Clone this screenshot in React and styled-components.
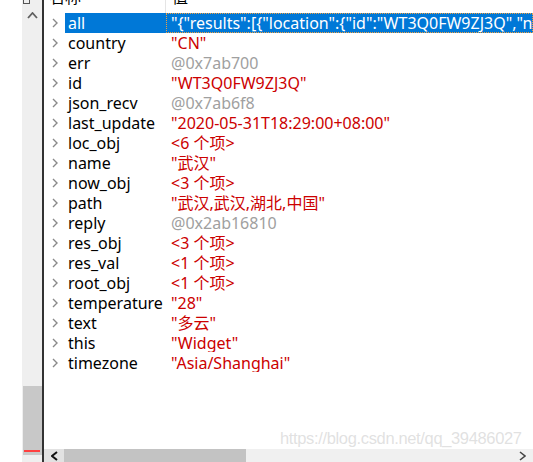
import React from "react";
import styled, { createGlobalStyle } from "styled-components";

const GlobalStyle = createGlobalStyle`
  html, body {
    margin: 0;
    padding: 0;
    background: #fff;
  }
  body {
    font-family: "Noto Sans", "Noto Sans CJK SC", sans-serif;
  }
`;

const Frame = styled.div`
  position: relative;
  display: flex;
  width: 533px;
  height: 462px;
  overflow: hidden;
  background: #fff;
`;

const Gutter = styled.div`
  width: 22px;
  flex: none;
  background: #fff;
`;

const ToolFragment = styled.div`
  position: absolute;
  left: 23px;
  top: -4px;
  width: 5px;
  height: 6px;
  border: 1px solid #555;
  z-index: 2;
`;

const VScroll = styled.div`
  width: 20px;
  flex: none;
  background: #efefef;
  display: flex;
  flex-direction: column;
  align-items: center;
`;

const ScrollButton = styled.div`
  height: ${(p) => p.size}px;
  width: 100%;
  display: flex;
  align-items: center;
  justify-content: center;
  flex: none;
`;

const VTrack = styled.div`
  flex: 1;
`;

const VThumb = styled.div`
  width: 19px;
  height: 69px;
  margin: 0 0 7px 0;
  background: #c8c8c8;
  display: flex;
  align-items: flex-end;
  justify-content: center;
  padding-bottom: 3px;
  box-sizing: border-box;
`;

const RedMark = styled.div`
  width: 16px;
  height: 2px;
  background: #ff4040;
`;

const Divider = styled.div`
  width: 2px;
  flex: none;
  background: #333;
`;

const Main = styled.div`
  flex: 1;
  display: flex;
  flex-direction: column;
  min-width: 0;
`;

const Header = styled.div`
  height: 13px;
  flex: none;
  display: grid;
  grid-template-columns: 122px 1fr;
  overflow: hidden;
  font-size: 16px;
  color: #000;
`;

const HeaderCell = styled.div`
  padding-left: ${(p) => p.pad}px;
  line-height: 20px;
  margin-top: -13px;
  border-right: ${(p) => (p.sep ? "1px solid #e5e5e5" : "none")};
  white-space: nowrap;
`;

const List = styled.div`
  flex: 1;
  display: flex;
  flex-direction: column;
`;

const Row = styled.div`
  display: grid;
  grid-template-columns: 21px 101px 1fr;
  height: 20px;
  font-size: 16px;
  line-height: 20px;
  white-space: nowrap;
`;

const Expander = styled.div`
  display: flex;
  align-items: center;
  justify-content: center;
  padding-left: 1px;
`;

const NameCell = styled.div`
  padding-left: 3px;
  background: ${(p) => (p.selected ? "#0078d7" : "transparent")};
  color: ${(p) => (p.selected ? "#fff" : "#000")};
  overflow: hidden;
`;

const ValueCell = styled.div`
  padding-left: 4px;
  background: ${(p) => (p.selected ? "#0078d7" : "transparent")};
  color: ${(p) =>
    p.selected ? "#fff" : p.kind === "ptr" ? "#a0a0a0" : "#cc0000"};
  border: 1px dotted ${(p) => (p.selected ? "#f0a040" : "transparent")};
  line-height: 18px;
  overflow: hidden;
`;

const HScroll = styled.div`
  height: 13px;
  flex: none;
  display: flex;
  background: #f0f0f0;
`;

const HButton = styled.div`
  width: ${(p) => p.w}px;
  flex: none;
  display: flex;
  align-items: center;
  justify-content: center;
  background: ${(p) => p.bg || "transparent"};
`;

const HThumb = styled.div`
  width: 182px;
  background: #c3c3c3;
  flex: none;
`;

const HTrack = styled.div`
  flex: 1;
`;

const Watermark = styled.div`
  position: absolute;
  left: 280px;
  top: 429px;
  font-family: "Liberation Sans", Arial, sans-serif;
  font-size: 16.5px;
  letter-spacing: -0.35px;
  color: rgba(200, 200, 200, 0.55);
  white-space: nowrap;
  pointer-events: none;
`;

const Chevron = ({ dir = "right", color = "#8a8a8a", w = 6, h = 10, sw = 1.4 }) => {
  const paths = {
    right: `M1 1 L${w - 1} ${h / 2} L1 ${h - 1}`,
    left: `M${w - 1} 1 L1 ${h / 2} L${w - 1} ${h - 1}`,
    up: `M1 ${h - 1} L${w / 2} 1 L${w - 1} ${h - 1}`,
  };
  return (
    <svg width={w} height={h} viewBox={`0 0 ${w} ${h}`}>
      <path d={paths[dir]} fill="none" stroke={color} strokeWidth={sw} />
    </svg>
  );
};

const rows = [
  { name: "all", value: '"{"results":[{"location":{"id":"WT3Q0FW9ZJ3Q","name":"武汉"', selected: true },
  { name: "country", value: '"CN"' },
  { name: "err", value: "@0x7ab700", kind: "ptr" },
  { name: "id", value: '"WT3Q0FW9ZJ3Q"' },
  { name: "json_recv", value: "@0x7ab6f8", kind: "ptr" },
  { name: "last_update", value: '"2020-05-31T18:29:00+08:00"' },
  { name: "loc_obj", value: "<6 个项>" },
  { name: "name", value: '"武汉"' },
  { name: "now_obj", value: "<3 个项>" },
  { name: "path", value: '"武汉,武汉,湖北,中国"' },
  { name: "reply", value: "@0x2ab16810", kind: "ptr" },
  { name: "res_obj", value: "<3 个项>" },
  { name: "res_val", value: "<1 个项>" },
  { name: "root_obj", value: "<1 个项>" },
  { name: "temperature", value: '"28"' },
  { name: "text", value: '"多云"' },
  { name: "this", value: '"Widget"' },
  { name: "timezone", value: '"Asia/Shanghai"' },
];

export default function App() {
  return (
    <>
      <GlobalStyle />
      <Frame>
        <Gutter />
        <ToolFragment />
        <VScroll>
          <ScrollButton size={30}>
            <Chevron dir="up" color="#606060" w={11} h={7} sw={1.8} />
          </ScrollButton>
          <VTrack />
          <VThumb>
            <RedMark />
          </VThumb>
        </VScroll>
        <Divider />
        <Main>
          <Header>
            <HeaderCell pad={5} sep>
              名称
            </HeaderCell>
            <HeaderCell pad={6}>值</HeaderCell>
          </Header>
          <List>
            {rows.map((r) => (
              <Row key={r.name}>
                <Expander>
                  <Chevron />
                </Expander>
                <NameCell selected={r.selected}>{r.name}</NameCell>
                <ValueCell selected={r.selected} kind={r.kind}>
                  {r.value}
                </ValueCell>
              </Row>
            ))}
          </List>
          <HScroll>
            <HButton w={20} bg="#e2e2e2">
              <Chevron dir="left" color="#111" w={7} h={10} sw={2} />
            </HButton>
            <HThumb />
            <HTrack />
            <HButton w={22}>
              <Chevron dir="right" color="#444" w={7} h={10} sw={1.6} />
            </HButton>
          </HScroll>
        </Main>
        <Watermark>https://blog.csdn.net/qq_39486027</Watermark>
      </Frame>
    </>
  );
}
